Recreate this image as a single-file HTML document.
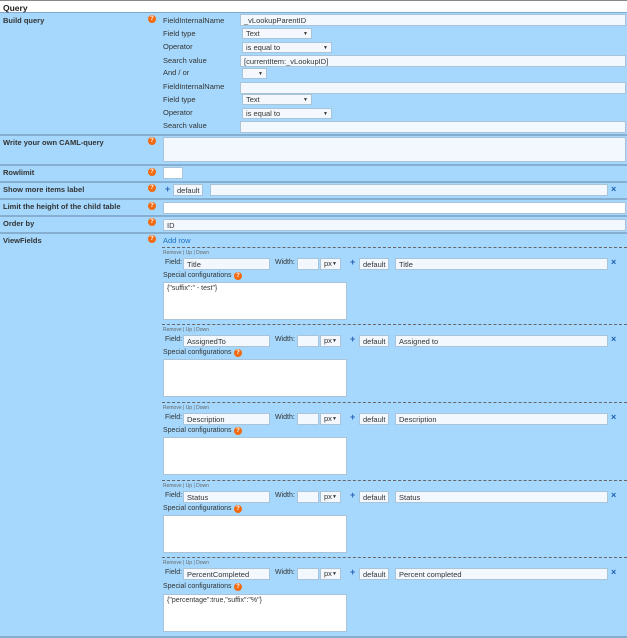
<!DOCTYPE html><html><head><style>
*{box-sizing:border-box;margin:0;padding:0}
body{width:627px;height:638px;background:#a5d8fc;font-family:"Liberation Sans",sans-serif;font-size:8px;color:#333;position:relative;overflow:hidden}
.a{position:absolute}
.hd{left:0;top:0;width:627px;height:13px;background:#fff;border-top:1px solid #888;border-bottom:1px solid #7ea9cc;font-weight:bold;font-size:8.5px;padding:2px 3px;color:#222}
.lb{font-weight:bold;left:3px;font-size:7.5px;color:#333}
.sep{left:0;width:627px;height:2px;background:#86aed0}
.q{width:8px;height:8px;border-radius:50%;background:#f26a10;color:#fff;font-size:6px;font-weight:bold;text-align:center;line-height:8px}
.in{background:#f2f8fe;border:1px solid #a9c4d8;height:12px;font-size:7.5px;padding:1px 3px;line-height:9px;color:#333;white-space:nowrap;overflow:hidden}
.w{background:#fff}
.sel{background:#f4f8fc;border:1px solid #a9c4d8;height:11px;font-size:7.5px;padding:0 3px;line-height:9px}
.sel:after{content:"▼";position:absolute;right:3px;top:1px;font-size:5px}
.t{font-size:7.5px;color:#333;white-space:nowrap}
.f{font-size:7px}
.ta{background:#fff;border:1px solid #a9c4d8;font-size:7px;padding:2px 3px}
.dash{left:162px;width:465px;border-top:1px dashed #666}
.sm{font-size:5px;color:#666}
.x{color:#1b5fb0;font-weight:bold;font-size:9px}
.pl{color:#2a64b8;font-weight:bold;font-size:9px}
</style></head><body>
<div class="a hd">Query</div>
<div class="a lb" style="top:16px">Build query</div>
<div class="a q" style="left:148px;top:15px">?</div>
<div class="a t" style="left:163px;top:16px">FieldInternalName</div>
<div class="a in" style="left:240px;top:14px;width:386px">_vLookupParentID</div>
<div class="a t" style="left:163px;top:29px">Field type</div>
<div class="a sel" style="left:242px;top:28px;width:70px">Text</div>
<div class="a t" style="left:163px;top:42px">Operator</div>
<div class="a sel" style="left:242px;top:42px;width:90px">is equal to</div>
<div class="a t" style="left:163px;top:56px">Search value</div>
<div class="a in" style="left:240px;top:55px;width:386px">[currentItem:_vLookupID]</div>
<div class="a t" style="left:163px;top:68px">And / or</div>
<div class="a sel" style="left:242px;top:68px;width:25px"></div>
<div class="a t" style="left:163px;top:82px">FieldInternalName</div>
<div class="a in" style="left:240px;top:82px;width:386px"></div>
<div class="a t" style="left:163px;top:95px">Field type</div>
<div class="a sel" style="left:242px;top:94px;width:70px">Text</div>
<div class="a t" style="left:163px;top:108px">Operator</div>
<div class="a sel" style="left:242px;top:108px;width:90px">is equal to</div>
<div class="a t" style="left:163px;top:121px">Search value</div>
<div class="a in" style="left:240px;top:121px;width:386px"></div>
<div class="a sep" style="top:134px"></div>

<div class="a lb" style="top:138px">Write your own CAML-query</div>
<div class="a q" style="left:148px;top:137px">?</div>
<div class="a in" style="left:163px;top:137px;width:463px;height:25px"></div>
<div class="a sep" style="top:164px"></div>
<div class="a lb" style="top:168px">Rowlimit</div>
<div class="a q" style="left:148px;top:168px">?</div>
<div class="a in w" style="left:163px;top:167px;width:20px"></div>
<div class="a sep" style="top:181px"></div>
<div class="a lb" style="top:185px">Show more items label</div>
<div class="a q" style="left:148px;top:184px">?</div>
<div class="a pl" style="left:165px;top:184px">+</div>
<div class="a in" style="left:173px;top:184px;width:30px">default</div>
<div class="a in" style="left:210px;top:184px;width:398px"></div>
<div class="a x" style="left:611px;top:184px">×</div>
<div class="a sep" style="top:198px"></div>
<div class="a lb" style="top:202px">Limit the height of the child table</div>
<div class="a q" style="left:148px;top:202px">?</div>
<div class="a in w" style="left:163px;top:202px;width:463px"></div>
<div class="a sep" style="top:215px"></div>
<div class="a lb" style="top:219px">Order by</div>
<div class="a q" style="left:148px;top:218px">?</div>
<div class="a in" style="left:163px;top:219px;width:463px">ID</div>
<div class="a sep" style="top:232px"></div>
<div class="a lb" style="top:236px">ViewFields</div>
<div class="a q" style="left:148px;top:235px">?</div>
<div class="a t" style="left:163px;top:236px;color:#1e6fc0">Add row</div>

<div class="a" style="left:0;top:247px;width:627px;height:78px">
<div class="a dash" style="top:0"></div><div class="a sm" style="left:163px;top:3px">Remove | Up | Down</div>
<div class="a t f" style="left:165px;top:12px">Field:</div><div class="a in" style="left:183px;top:11px;width:87px">Title</div>
<div class="a t f" style="left:275px;top:12px">Width:</div><div class="a in" style="left:297px;top:11px;width:22px"></div>
<div class="a sel" style="left:320px;top:11px;width:21px;height:12px">px</div>
<div class="a pl" style="left:350px;top:10px">+</div><div class="a in" style="left:359px;top:11px;width:30px">default</div>
<div class="a in" style="left:395px;top:11px;width:213px">Title</div><div class="a x" style="left:611px;top:10px">×</div>
<div class="a t f" style="left:163px;top:25px">Special configurations</div><div class="a q" style="left:234px;top:25px">?</div>
<div class="a ta" style="left:163px;top:35px;width:184px;height:38px">{"suffix":" - test"}</div>
</div>
<div class="a" style="left:0;top:324px;width:627px;height:78px">
<div class="a dash" style="top:0"></div><div class="a sm" style="left:163px;top:3px">Remove | Up | Down</div>
<div class="a t f" style="left:165px;top:12px">Field:</div><div class="a in" style="left:183px;top:11px;width:87px">AssignedTo</div>
<div class="a t f" style="left:275px;top:12px">Width:</div><div class="a in" style="left:297px;top:11px;width:22px"></div>
<div class="a sel" style="left:320px;top:11px;width:21px;height:12px">px</div>
<div class="a pl" style="left:350px;top:10px">+</div><div class="a in" style="left:359px;top:11px;width:30px">default</div>
<div class="a in" style="left:395px;top:11px;width:213px">Assigned to</div><div class="a x" style="left:611px;top:10px">×</div>
<div class="a t f" style="left:163px;top:25px">Special configurations</div><div class="a q" style="left:234px;top:25px">?</div>
<div class="a ta" style="left:163px;top:35px;width:184px;height:38px"></div>
</div>
<div class="a" style="left:0;top:402px;width:627px;height:78px">
<div class="a dash" style="top:0"></div><div class="a sm" style="left:163px;top:3px">Remove | Up | Down</div>
<div class="a t f" style="left:165px;top:12px">Field:</div><div class="a in" style="left:183px;top:11px;width:87px">Description</div>
<div class="a t f" style="left:275px;top:12px">Width:</div><div class="a in" style="left:297px;top:11px;width:22px"></div>
<div class="a sel" style="left:320px;top:11px;width:21px;height:12px">px</div>
<div class="a pl" style="left:350px;top:10px">+</div><div class="a in" style="left:359px;top:11px;width:30px">default</div>
<div class="a in" style="left:395px;top:11px;width:213px">Description</div><div class="a x" style="left:611px;top:10px">×</div>
<div class="a t f" style="left:163px;top:25px">Special configurations</div><div class="a q" style="left:234px;top:25px">?</div>
<div class="a ta" style="left:163px;top:35px;width:184px;height:38px"></div>
</div>
<div class="a" style="left:0;top:480px;width:627px;height:78px">
<div class="a dash" style="top:0"></div><div class="a sm" style="left:163px;top:3px">Remove | Up | Down</div>
<div class="a t f" style="left:165px;top:12px">Field:</div><div class="a in" style="left:183px;top:11px;width:87px">Status</div>
<div class="a t f" style="left:275px;top:12px">Width:</div><div class="a in" style="left:297px;top:11px;width:22px"></div>
<div class="a sel" style="left:320px;top:11px;width:21px;height:12px">px</div>
<div class="a pl" style="left:350px;top:10px">+</div><div class="a in" style="left:359px;top:11px;width:30px">default</div>
<div class="a in" style="left:395px;top:11px;width:213px">Status</div><div class="a x" style="left:611px;top:10px">×</div>
<div class="a t f" style="left:163px;top:25px">Special configurations</div><div class="a q" style="left:234px;top:25px">?</div>
<div class="a ta" style="left:163px;top:35px;width:184px;height:38px"></div>
</div>
<div class="a" style="left:0;top:557px;width:627px;height:81px">
<div class="a dash" style="top:0"></div><div class="a sm" style="left:163px;top:3px">Remove | Up | Down</div>
<div class="a t f" style="left:165px;top:12px">Field:</div><div class="a in" style="left:183px;top:11px;width:87px">PercentCompleted</div>
<div class="a t f" style="left:275px;top:12px">Width:</div><div class="a in" style="left:297px;top:11px;width:22px"></div>
<div class="a sel" style="left:320px;top:11px;width:21px;height:12px">px</div>
<div class="a pl" style="left:350px;top:10px">+</div><div class="a in" style="left:359px;top:11px;width:30px">default</div>
<div class="a in" style="left:395px;top:11px;width:213px">Percent completed</div><div class="a x" style="left:611px;top:10px">×</div>
<div class="a t f" style="left:163px;top:26px">Special configurations</div><div class="a q" style="left:234px;top:26px">?</div>
<div class="a ta" style="left:163px;top:37px;width:184px;height:38px">{"percentage":true,"suffix":"%"}</div>
</div>
<div class="a" style="left:0;top:636px;width:627px;height:2px;background:#86aed0"></div>
</body></html>
